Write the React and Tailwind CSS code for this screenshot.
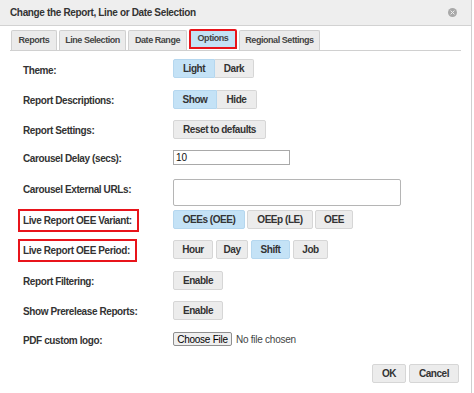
import React from "react";

const font = { fontFamily: '"Liberation Sans", Arial, sans-serif' };

function Btn({ children, active, w, className = "" }) {
  return (
    <button
      type="button"
      style={{ width: w }}
      className={`flex h-full items-center justify-center rounded-[2px] border text-[10px] font-bold tracking-[-0.45px] text-[#333] ${
        active ? "border-[#b5d7ef] bg-[#c4e2f6]" : "border-[#d6d6d6] bg-[#ececec]"
      } ${className}`}
    >
      {children}
    </button>
  );
}

function Row({ label, h, boxed, children, align = "items-center" }) {
  return (
    <div className={`flex ${align}`} style={{ height: h }}>
      <div className="w-[150px] shrink-0 self-center">
        <span
          className={`inline-block text-[10px] font-bold tracking-[-0.4px] text-[#333] ${
            boxed ? "-ml-[5px] border-2 border-[#e8141b] py-[2px] pl-[3px] pr-[5px]" : ""
          }`}
        >
          {label}
        </span>
      </div>
      {children}
    </div>
  );
}

const tabs = [
  ["Reports", 46],
  ["Line Selection", 67],
  ["Date Range", 59],
  ["Options", 48],
  ["Regional Settings", 81],
];

export default function App() {
  return (
    <div className="h-[393px] w-[474px] overflow-hidden bg-white" style={font}>
      <div className="h-full w-[472px] border-r border-[#cfcfcf]">
        <div className="flex h-[26px] items-center justify-between border-b border-[#d2d2d2] bg-[#eeeeee] pl-[10px] pr-[14px]">
          <span className="text-[10px] font-bold tracking-[-0.35px] text-[#333]">
            Change the Report, Line or Date Selection
          </span>
          <span className="flex h-[9px] w-[9px] items-center justify-center rounded-full bg-[#a9a9a9]">
            <svg viewBox="0 0 8 8" className="h-[5px] w-[5px]" stroke="#eee" strokeWidth="1.6">
              <path d="M1 1l6 6M7 1l-6 6" />
            </svg>
          </span>
        </div>

        <div className="ml-[10px] mr-[10px] mt-[4px] flex h-[21px] items-end border-b border-[#d0d0d0] pl-[1px]">
          {tabs.map(([t, w], i) => (
            <div
              key={t}
              style={{ width: w }}
              className={`flex h-[20px] shrink-0 items-center justify-center rounded-t-[2px] text-[9px] font-bold tracking-[-0.45px] text-[#444] ${
                i > 0 ? "ml-[2px]" : ""
              } ${
                t === "Options"
                  ? "mb-[1px] border-2 border-[#e8141b] bg-[#c4e2f6]"
                  : "border border-b-0 border-[#d0d0d0] bg-[#ebebeb]"
              }`}
            >
              {t}
            </div>
          ))}
        </div>

        <div className="pl-[23px]">
          <div className="h-[2px]" />
          <Row label="Theme:" h={31}>
            <div className="flex h-[19px]">
              <Btn active w={42} className="rounded-r-none">Light</Btn>
              <Btn w={39} className="rounded-l-none border-l-0">Dark</Btn>
            </div>
          </Row>
          <Row label="Report Descriptions:" h={30}>
            <div className="flex h-[19px]">
              <Btn active w={44} className="rounded-r-none">Show</Btn>
              <Btn w={40} className="rounded-l-none border-l-0">Hide</Btn>
            </div>
          </Row>
          <Row label="Report Settings:" h={30}>
            <div className="flex h-[19px]">
              <Btn w={93}>Reset to defaults</Btn>
            </div>
          </Row>
          <Row label="Carousel Delay (secs):" h={26}>
            <div className="flex h-[15px] w-[117px] items-center border border-[#a9a9a9] px-[2px] text-[10px] text-[#111]">
              10
            </div>
          </Row>
          <Row label="Carousel External URLs:" h={36} align="items-end">
            <div className="h-[27px] w-[228px] rounded-[2px] border border-[#b5b5b5]" />
          </Row>
          <Row label="Live Report OEE Variant:" h={26} boxed>
            <div className="flex h-[19px] gap-[2px]">
              <Btn active w={72}>OEEs (OEE)</Btn>
              <Btn w={66}>OEEp (LE)</Btn>
              <Btn w={38}>OEE</Btn>
            </div>
          </Row>
          <Row label="Live Report OEE Period:" h={34} boxed>
            <div className="flex h-[19px] gap-[3px]">
              <Btn w={40}>Hour</Btn>
              <Btn w={32}>Day</Btn>
              <Btn active w={39}>Shift</Btn>
              <Btn w={35}>Job</Btn>
            </div>
          </Row>
          <Row label="Report Filtering:" h={28}>
            <div className="flex h-[19px]">
              <Btn w={50}>Enable</Btn>
            </div>
          </Row>
          <Row label="Show Prerelease Reports:" h={32}>
            <div className="flex h-[19px]">
              <Btn w={50}>Enable</Btn>
            </div>
          </Row>
          <Row label="PDF custom logo:" h={26}>
            <div className="flex items-center gap-[4px] text-[10px] tracking-[-0.25px]">
              <span className="flex h-[14px] w-[59px] items-center justify-center rounded-[2px] border border-[#8f8f8f] bg-[#efefef] text-black">
                Choose File
              </span>
              <span className="text-[#444]">No file chosen</span>
            </div>
          </Row>
        </div>

        <div className="mt-[12px] flex h-[19px] justify-end gap-[3px] pr-[12px]">
          <Btn w={34}>OK</Btn>
          <Btn w={50}>Cancel</Btn>
        </div>
      </div>
    </div>
  );
}
